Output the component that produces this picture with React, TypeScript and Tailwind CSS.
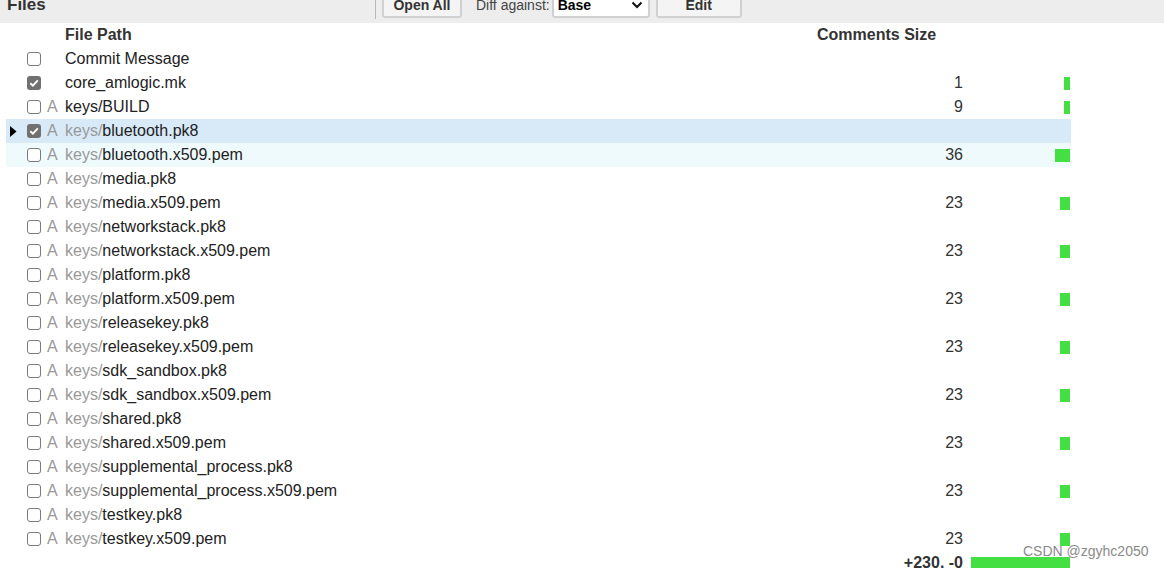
import React from "react";

type Row = {
  dir?: string;
  name: string;
  status?: string;
  checked?: boolean;
  size?: number;
  bar?: number;
  selected?: boolean;
  hover?: boolean;
};

const rows: Row[] = [
  { name: "Commit Message" },
  { name: "core_amlogic.mk", checked: true, size: 1, bar: 6 },
  { name: "keys/BUILD", status: "A", size: 9, bar: 6 },
  { dir: "keys/", name: "bluetooth.pk8", status: "A", checked: true, selected: true },
  { dir: "keys/", name: "bluetooth.x509.pem", status: "A", size: 36, bar: 15, hover: true },
  { dir: "keys/", name: "media.pk8", status: "A" },
  { dir: "keys/", name: "media.x509.pem", status: "A", size: 23, bar: 10 },
  { dir: "keys/", name: "networkstack.pk8", status: "A" },
  { dir: "keys/", name: "networkstack.x509.pem", status: "A", size: 23, bar: 10 },
  { dir: "keys/", name: "platform.pk8", status: "A" },
  { dir: "keys/", name: "platform.x509.pem", status: "A", size: 23, bar: 10 },
  { dir: "keys/", name: "releasekey.pk8", status: "A" },
  { dir: "keys/", name: "releasekey.x509.pem", status: "A", size: 23, bar: 10 },
  { dir: "keys/", name: "sdk_sandbox.pk8", status: "A" },
  { dir: "keys/", name: "sdk_sandbox.x509.pem", status: "A", size: 23, bar: 10 },
  { dir: "keys/", name: "shared.pk8", status: "A" },
  { dir: "keys/", name: "shared.x509.pem", status: "A", size: 23, bar: 10 },
  { dir: "keys/", name: "supplemental_process.pk8", status: "A" },
  { dir: "keys/", name: "supplemental_process.x509.pem", status: "A", size: 23, bar: 10 },
  { dir: "keys/", name: "testkey.pk8", status: "A" },
  { dir: "keys/", name: "testkey.x509.pem", status: "A", size: 23, bar: 10 },
];

function Checkbox({ checked }: { checked?: boolean }) {
  if (checked) {
    return (
      <div className="w-[14px] h-[14px] rounded-[3px] bg-[#707070] flex items-center justify-center">
        <svg width="12" height="12" viewBox="0 0 12 12">
          <path d="M2.3 6.2 L4.9 8.7 L9.8 3.4" fill="none" stroke="#fff" strokeWidth="1.9" />
        </svg>
      </div>
    );
  }
  return <div className="w-[14px] h-[14px] rounded-[3px] border border-[#7a7a7a] bg-white" />;
}

function Button({ children, w }: { children: React.ReactNode; w: string }) {
  return (
    <div
      className={`${w} h-[26px] flex items-center justify-center rounded-[3px] border-2 border-[#d0d0d0] bg-[#f4f4f4] text-[14px] text-[#333] font-semibold`}
    >
      {children}
    </div>
  );
}

export default function App() {
  return (
    <div
      className="w-[1164px] h-[568px] overflow-hidden bg-white relative"
      style={{ fontFamily: '"Liberation Sans", Arial, sans-serif' }}
    >
      {/* Top bar */}
      <div className="h-[23px] bg-[#ededed] overflow-hidden">
        <div className="mt-[-8px] h-[26px] flex items-center">
          <div className="pl-[7px] w-[375px] text-[17px] font-bold text-[#333]">Files</div>
          <div className="w-px h-[27px] bg-[#b9b9b9]" />
          <div className="w-[6px]" />
          <Button w="w-[80px]">Open All</Button>
          <div className="ml-[14px] text-[14px] text-[#444] leading-none">Diff against:</div>
          <div className="ml-[2px] w-[98px] h-[26px] rounded-[3px] border-2 border-[#d0d0d0] bg-white flex items-center justify-between pl-[4px] pr-[5px]">
            <span className="text-[14px] font-bold text-black">Base</span>
            <svg width="12" height="8" viewBox="0 0 12 8">
              <path d="M1.5 1.5 L6 6 L10.5 1.5" fill="none" stroke="#111" strokeWidth="2" />
            </svg>
          </div>
          <div className="w-[6px]" />
          <Button w="w-[86px]">Edit</Button>
        </div>
      </div>

      {/* Table */}
      <div className="ml-[6px] w-[1065px] text-[16px] text-[#222]">
        {/* Header row */}
        <div className="h-[24px] flex items-center font-bold text-[#333]">
          <div className="w-[59px]" />
          <div className="w-[752px]">File Path</div>
          <div className="w-[146px]">Comments Size</div>
        </div>

        {rows.map((r, i) => (
          <div
            key={i}
            className={`h-[24px] flex items-center ${
              r.selected ? "bg-[#d8e9f8]" : r.hover ? "bg-[#effafd]" : ""
            }`}
          >
            <div className="w-[21px] flex items-center pl-[4px]">
              {r.selected && (
                <svg width="7" height="11" viewBox="0 0 7 11">
                  <path d="M0 0 L6.5 5.5 L0 11 Z" fill="#000" />
                </svg>
              )}
            </div>
            <div className="w-[20px] flex items-center">
              <Checkbox checked={r.checked} />
            </div>
            <div className="w-[18px] text-[#999]">{r.status ?? ""}</div>
            <div className="w-[752px] whitespace-nowrap">
              {r.dir && <span className="text-[#999]">{r.dir}</span>}
              <span>{r.name}</span>
            </div>
            <div className="w-[146px] text-right text-[#333]">{r.size ?? ""}</div>
            <div className="w-[108px] flex justify-end pr-[1px]">
              {r.bar ? <div className="h-[13px] bg-[#43df43]" style={{ width: r.bar }} /> : null}
            </div>
          </div>
        ))}

        {/* Total row */}
        <div className="h-[24px] flex items-center">
          <div className="w-[957px] text-right font-bold text-[#333]">+230. -0</div>
          <div className="w-[108px] flex justify-end pr-[1px]">
            <div className="h-[13px] w-[99px] bg-[#43df43]" />
          </div>
        </div>
      </div>

      {/* Watermark */}
      <div className="absolute left-[1023px] top-[541px] text-[14px] text-[#8a8a8a] whitespace-nowrap [text-shadow:0_0_1px_#fff]">
        CSDN @zgyhc2050
      </div>
    </div>
  );
}
